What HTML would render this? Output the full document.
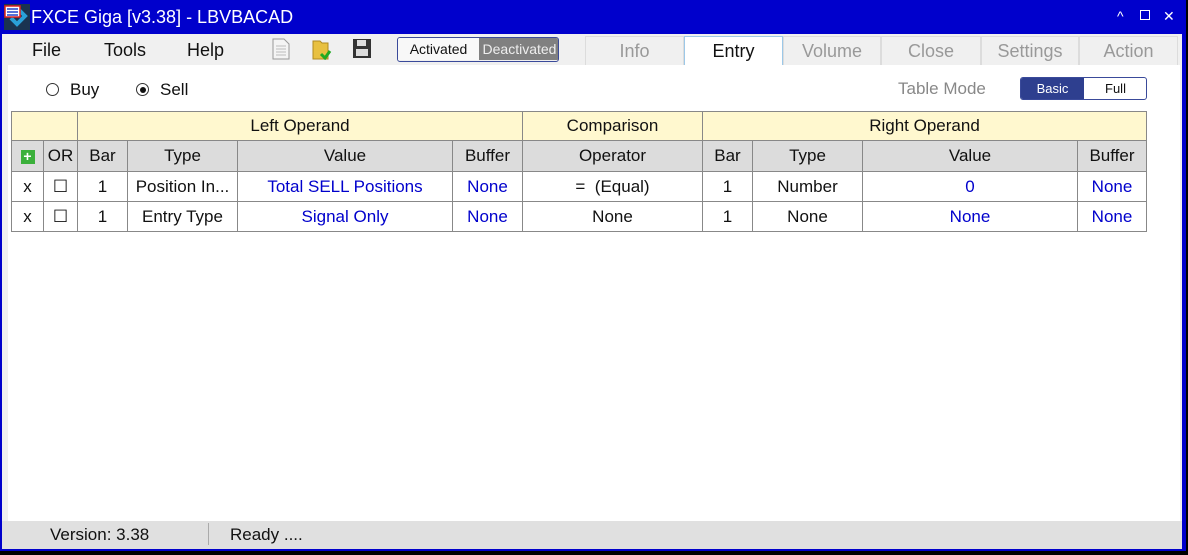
<!DOCTYPE html>
<html><head><style>
*{margin:0;padding:0;box-sizing:border-box}
body{width:1188px;height:555px;background:#000;position:relative;overflow:hidden;font-family:"Liberation Sans",sans-serif;color:#111}
.win{position:absolute;left:0;top:0;width:1186px;height:551px;background:#0000cc;}
.title{position:absolute;left:0;top:0;width:1186px;height:34px;background:#0000cc;color:#fff;font-size:18px}
.title span{position:absolute;left:31px;top:7px}
.ctl{position:absolute;top:8px;color:#fff;font-size:14px}
.body{position:absolute;left:2px;top:34px;width:1180px;height:515px;background:#f0f0f0}
.menu{position:absolute;top:6px;font-size:18px}
.tab{position:absolute;top:2px;height:30px;border:1px solid #dcdcdc;border-bottom:none;background:#f0f0f0;color:#999;font-size:18px;text-align:center;line-height:29px}
.tab.act{background:#fff;color:#111;border-color:#9cc8e8;height:32px}
.panel{position:absolute;left:6px;top:31px;width:1172px;height:456px;background:#fff}
.status{position:absolute;left:0;top:487px;width:1180px;height:28px;background:#e0e0e0;font-size:17px}
table{position:absolute;left:11px;top:111px;border-collapse:collapse;font-size:17px;table-layout:fixed}
td{border:1px solid #888;text-align:center;height:30px;white-space:nowrap;overflow:hidden;padding:0}
.y td{background:#fff8cf;height:29px}
.g td{background:#dcdcdc;height:31px}
.b{color:#0000cc}
</style></head><body>
<div class="win">
 <div class="title">
  <svg style="position:absolute;left:4px;top:4px" width="26" height="26"><rect width="26" height="26" fill="#1a3350"/><path d="M7 14 L13 20 L21 12 L15 6" stroke="#2aa0d8" stroke-width="4" fill="none"/><rect x="1" y="2" width="15" height="11" fill="#fff" stroke="#d22" stroke-width="1.5"/><path d="M3 5h11M3 8h11M3 11h11" stroke="#24c" stroke-width="1.5"/></svg>
  <span>FXCE Giga [v3.38] - LBVBACAD</span>
  <div class="ctl" style="left:1117px">^</div><div class="ctl" style="left:1140px;top:10px;width:10px;height:10px;border:1.5px solid #fff"></div><div class="ctl" style="left:1163px">✕</div>
 </div>
 <div class="body">
  <div class="menu" style="left:30px">File</div>
  <div class="menu" style="left:102px">Tools</div>
  <div class="menu" style="left:185px">Help</div>
  <svg style="position:absolute;left:270px;top:4px" width="18" height="22"><path d="M1 1h11l5 5v15H1z" fill="#f4f4f4" stroke="#999"/><path d="M4 8h10M4 11h10M4 14h10M4 17h10" stroke="#bbb"/></svg>
  <svg style="position:absolute;left:310px;top:4px" width="20" height="22"><path d="M1 3h7l2 2h6v16H1z" fill="#e8c040" stroke="#b08a20"/><path d="M9 16l4 4 5-7" stroke="#2a2" stroke-width="3" fill="none"/></svg>
  <svg style="position:absolute;left:350px;top:4px" width="20" height="21"><rect x="1" y="1" width="18" height="19" fill="#333"/><rect x="5" y="2" width="9" height="6" fill="#ddd"/><rect x="4" y="11" width="12" height="7" fill="#ddd"/></svg>
  <div style="position:absolute;left:395px;top:3px;width:162px;height:25px;border:1.5px solid #3a4a9a;border-radius:3px;overflow:hidden;font-size:14px;line-height:22px">
   <div style="position:absolute;left:0;width:81px;height:22px;background:#f8f8f8;text-align:center">Activated</div>
   <div style="position:absolute;left:81px;width:81px;height:22px;background:#808080;color:#eee;text-align:center">Deactivated</div>
  </div>
  <div class="tab" style="left:583px;width:99px">Info</div>
  <div class="tab act" style="left:682px;width:99px">Entry</div>
  <div class="tab" style="left:781px;width:98px">Volume</div>
  <div class="tab" style="left:879px;width:100px">Close</div>
  <div class="tab" style="left:979px;width:98px">Settings</div>
  <div class="tab" style="left:1077px;width:99px">Action</div>
  <div class="panel">
   <div style="position:absolute;left:38px;top:18px;width:13px;height:13px;border:1px solid #333;border-radius:50%"></div>
   <div style="position:absolute;left:62px;top:15px;font-size:17px">Buy</div>
   <div style="position:absolute;left:128px;top:18px;width:13px;height:13px;border:1px solid #333;border-radius:50%"><div style="margin:2.5px;width:6px;height:6px;background:#111;border-radius:50%"></div></div>
   <div style="position:absolute;left:152px;top:15px;font-size:17px">Sell</div>
   <div style="position:absolute;left:890px;top:14px;font-size:17px;color:#888">Table Mode</div>
   <div style="position:absolute;left:1012px;top:12px;width:127px;height:23px;border:1px solid #3a4a9a;border-radius:3px;overflow:hidden;font-size:13px;line-height:21px">
    <div style="position:absolute;left:0;width:63px;height:21px;background:#2e3f8f;color:#fff;text-align:center">Basic</div>
    <div style="position:absolute;left:63px;width:63px;height:21px;text-align:center">Full</div>
   </div>
  </div>
  <div class="status">
   <div style="position:absolute;left:48px;top:4px">Version: 3.38</div>
   <div style="position:absolute;left:206px;top:2px;width:1px;height:22px;background:#aaa"></div>
   <div style="position:absolute;left:228px;top:4px">Ready ....</div>
  </div>
 </div>
 <table>
  <colgroup><col style="width:32px"><col style="width:34px"><col style="width:50px"><col style="width:110px"><col style="width:215px"><col style="width:70px"><col style="width:180px"><col style="width:50px"><col style="width:110px"><col style="width:215px"><col style="width:69px"></colgroup>
  <tr class="y"><td colspan="2"></td><td colspan="4">Left Operand</td><td>Comparison</td><td colspan="4">Right Operand</td></tr>
  <tr class="g"><td><span style="display:inline-block;width:14px;height:14px;background:#3bb03b;color:#fff;font-size:14px;line-height:13px;font-weight:bold;vertical-align:middle">+</span></td><td>OR</td><td>Bar</td><td>Type</td><td>Value</td><td>Buffer</td><td>Operator</td><td>Bar</td><td>Type</td><td>Value</td><td>Buffer</td></tr>
  <tr><td>x</td><td>☐</td><td>1</td><td>Position In...</td><td class="b">Total SELL Positions</td><td class="b">None</td><td>= &nbsp;(Equal)</td><td>1</td><td>Number</td><td class="b">0</td><td class="b">None</td></tr>
  <tr><td>x</td><td>☐</td><td>1</td><td>Entry Type</td><td class="b">Signal Only</td><td class="b">None</td><td>None</td><td>1</td><td>None</td><td class="b">None</td><td class="b">None</td></tr>
 </table>
</div>
</body></html>
